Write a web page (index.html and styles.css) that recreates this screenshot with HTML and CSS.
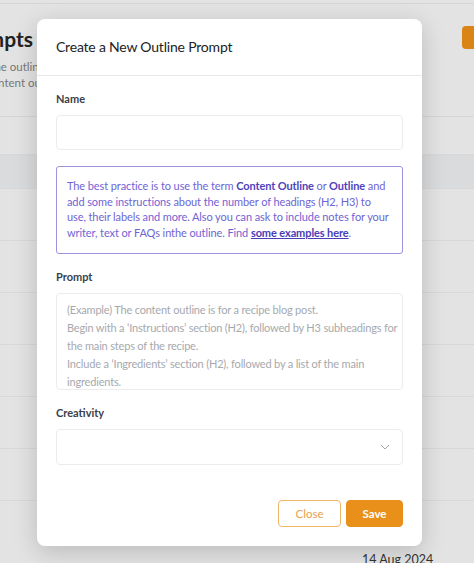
FILE: index.html
```html
<!DOCTYPE html>
<html>
<head>
<meta charset="UTF-8">
<title>Outline Prompts</title>
<link rel="stylesheet" href="styles.css">
</head>
<body>

	<div class="page">
		<div class="top-line"></div>
		<div class="page-head">
			<div class="intro">
				<h1 class="page-title">Outline Prompts</h1>
				<p class="page-desc"><span>Manage the outline prompts</span><span class="desc-2">used for all content outlines</span></p>
			</div>
			<div class="add-btn"></div>
		</div>
		<div class="table">
			<div class="row row-gap"></div>
			<div class="row row-head"></div>
			<div class="row"></div>
			<div class="row"></div>
			<div class="row"></div>
			<div class="row"></div>
			<div class="row"></div>
			<div class="row"></div>
			<div class="row row-last"><span class="date">14 Aug 2024</span></div>
		</div>
	</div>

	<!-- modal -->
	<div class="modal">
		<div class="modal-header">Create a New Outline Prompt</div>
		<div class="modal-body">
			<label class="field-label">Name</label>
			<div class="control input"></div>

			<div class="tip">
				The best practice is to use the term <b>Content Outline</b> or <b>Outline</b> and
				add some instructions about the number of headings (H2, H3) to
				use, their labels and more. Also you can ask to include notes for your
				writer, text or FAQs inthe outline. Find <a href="#">some examples here</a>.
			</div>

			<label class="field-label">Prompt</label>
			<div class="control textarea">
				(Example) The content outline is for a recipe blog post.<br>
				Begin with a ‘Instructions’ section (H2), followed by H3 subheadings for the main steps of the recipe.<br>
				Include a ‘Ingredients’ section (H2), followed by a list of the main ingredients.
			</div>

			<label class="field-label">Creativity</label>
			<div class="control select">
				<svg width="10" height="6" viewBox="0 0 10 6"><path d="M1 1l4 4 4-4" fill="none" stroke="#a0a4ab" stroke-width="1"/></svg>
			</div>

			<div class="actions">
				<button class="btn btn-close">Close</button>
				<button class="btn btn-save">Save</button>
			</div>
		</div>
	</div>

</body>
</html>
```

FILE: styles.css
```css
body{
	margin:0;
	padding:0;
	background:#e3e3e3;
	font-family:Lato, "Noto Sans", sans-serif;
	overflow:hidden;
}
.page{
	height:563px;
	position:relative;
}
.top-line{
	height:3px;
	border-bottom:1px solid #d6d6d6;
}
.page-head{
	display:flex;
	justify-content:space-between;
	align-items:flex-start;
	height:113px;
	border-bottom:1px solid #d6d6d6;
	box-sizing:border-box;
}
.intro{
	margin-left:-133px;
	padding-top:22px;
}
.page-title{
	margin:0;
	font-size:21px;
	font-weight:700;
	color:#222;
	line-height:26px;
	text-align:right;
	width:166px;
}
.page-desc{
	margin:7px 0 0 80px;
	font-size:11.5px;
	line-height:16px;
	color:#777;
	white-space:nowrap;
}
.page-desc span{
	display:block;
}
.page-desc .desc-2{
	margin-left:-19px;
}
.add-btn{
	width:30px;
	height:23px;
	margin:22px -18px 0 0;
	border-radius:4px;
	background:#da8415;
}
.row{
	height:52px;
	border-bottom:1px solid #d8d8d8;
	box-sizing:border-box;
	position:relative;
}
.row-gap{
	height:38px;
}
.row-head{
	height:34px;
	background:#dadbdd;
}
.row-last{
	height:70px;
}
.date{
	position:absolute;
	left:362px;
	top:51px;
	font-size:12.5px;
	color:#333;
}

/* modal */
.modal{
	position:absolute;
	left:37px;
	top:19px;
	width:385px;
	height:527px;
	background:#fff;
	border-radius:8px;
	box-shadow:0 6px 24px rgba(0,0,0,0.18);
}
.modal-header{
	height:56px;
	line-height:56px;
	padding:0 19px;
	font-size:14px;
	letter-spacing:-0.2px;
	color:#222;
	border-bottom:1px solid #e8e8e8;
}
.modal-body{
	padding:15px 19px 0;
	display:flex;
	flex-direction:column;
}
.field-label{
	font-size:11px;
	font-weight:700;
	line-height:16px;
	color:#3a3f4a;
	margin-bottom:8px;
}
.control{
	border:1px solid #ececec;
	border-radius:4px;
	box-sizing:border-box;
}
.input{
	height:35px;
	margin-bottom:16px;
}
.tip{
	border:1px solid #9d93e0;
	border-radius:3px;
	padding:11px 10px 13px;
	font-size:11px;
	letter-spacing:-0.1px;
	line-height:15.5px;
	color:#7064d4;
	margin-bottom:15px;
}
.tip b{
	font-weight:700;
	color:#5042bd;
}
.tip a{
	color:#4a3db8;
	font-weight:700;
	text-decoration:underline;
}
.textarea{
	height:97px;
	overflow:hidden;
	padding:7px 0 0 10px;
	font-size:11px;
	letter-spacing:-0.18px;
	line-height:18px;
	color:#a6a9ae;
	margin-bottom:15px;
}
.select{
	height:36px;
	display:flex;
	align-items:center;
	justify-content:flex-end;
	padding-right:12px;
}
.actions{
	display:flex;
	justify-content:flex-end;
	gap:5px;
	margin-top:35px;
}
.btn{
	height:27px;
	border-radius:4px;
	font-family:Lato, "Noto Sans", sans-serif;
	font-size:11.5px;
	cursor:pointer;
}
.btn-close{
	width:63px;
	background:#fff;
	border:1px solid #f0b56a;
	color:#e8a14a;
}
.btn-save{
	width:57px;
	background:#e8901a;
	border:1px solid #e8901a;
	color:#fff;
	font-weight:700;
}
```
